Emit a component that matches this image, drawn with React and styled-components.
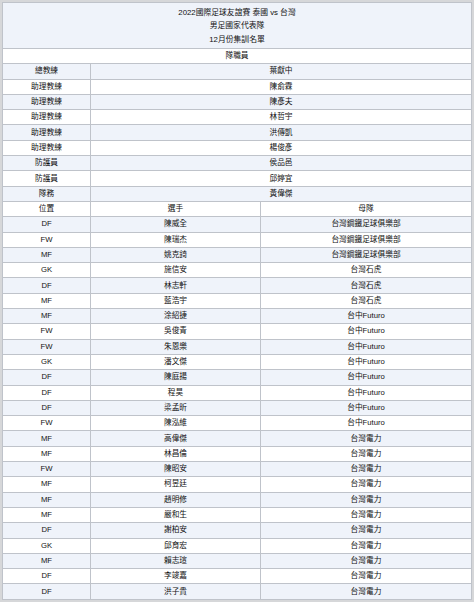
import React from "react";
import styled, { createGlobalStyle } from "styled-components";

const GlobalStyle = createGlobalStyle`
  html, body {
    margin: 0;
    padding: 0;
    background: #d6d7d9;
  }
  body {
    font-family: "Liberation Sans", "Noto Sans CJK TC", sans-serif;
  }
`;

const Sheet = styled.div`
  width: 474px;
  height: 602px;
  box-sizing: border-box;
  padding: 2px 2px 0 2px;
  overflow: hidden;
`;

const Table = styled.table`
  width: 100%;
  border-collapse: collapse;
  table-layout: fixed;
  font-size: 7.7px;
  color: #111;
  background: #fff;

  tr:nth-child(odd) {
    background: #eff3fa;
  }
`;

const Row = styled.tr`
  height: ${p => (p.$tall ? "46px" : "15.3px")};
`;

const Cell = styled.td`
  border: 1px solid #bfc3ca;
  text-align: center;
  vertical-align: middle;
  padding: 0;
  line-height: ${p => (p.$lines ? "13.3px" : "12px")};
  white-space: nowrap;
`;

const Title = styled.div`
  display: flex;
  flex-direction: column;
  align-items: center;
  padding-top: 1px;
  font-size: 7.8px;
`;

const staff = [
  ["總教練", "葉獻中"],
  ["助理教練", "陳俞霖"],
  ["助理教練", "陳彥夫"],
  ["助理教練", "林哲宇"],
  ["助理教練", "洪傳凱"],
  ["助理教練", "楊俊彥"],
  ["防護員", "侯品邑"],
  ["防護員", "邱婷宜"],
  ["隊務", "黃偉傑"]
];

const STEEL = "台灣鋼鐵足球俱樂部";
const TIGER = "台灣石虎";
const FUTURO = "台中Futuro";
const POWER = "台灣電力";

const players = [
  ["DF", "陳威全", STEEL],
  ["FW", "陳瑞杰", STEEL],
  ["MF", "姚克錡", STEEL],
  ["GK", "施信安", TIGER],
  ["DF", "林志軒", TIGER],
  ["MF", "藍浩宇", TIGER],
  ["MF", "涂紹捷", FUTURO],
  ["FW", "吳俊青", FUTURO],
  ["FW", "朱恩樂", FUTURO],
  ["GK", "潘文傑", FUTURO],
  ["DF", "陳庭揚", FUTURO],
  ["DF", "程昊", FUTURO],
  ["DF", "梁孟昕", FUTURO],
  ["FW", "陳泓維", FUTURO],
  ["MF", "高偉傑", POWER],
  ["MF", "林昌倫", POWER],
  ["FW", "陳昭安", POWER],
  ["MF", "柯昱廷", POWER],
  ["MF", "趙明修", POWER],
  ["MF", "嚴和生", POWER],
  ["DF", "謝柏安", POWER],
  ["GK", "邱育宏", POWER],
  ["MF", "賴志瑄", POWER],
  ["DF", "李竣嘉", POWER],
  ["DF", "洪子貴", POWER]
];

export default function App() {
  return (
    <>
      <GlobalStyle />
      <Sheet>
        <Table>
          <colgroup>
            <col style={{ width: "88px" }} />
            <col style={{ width: "170px" }} />
            <col />
          </colgroup>
          <tbody>
            <Row $tall>
              <Cell colSpan={3} $lines>
                <Title>
                  <span>2022國際足球友誼賽 泰國 vs 台灣</span>
                  <span>男足國家代表隊</span>
                  <span>12月份集訓名單</span>
                </Title>
              </Cell>
            </Row>
            <Row>
              <Cell colSpan={3}>隊職員</Cell>
            </Row>
            {staff.map(([role, name], i) => (
              <Row key={"s" + i}>
                <Cell>{role}</Cell>
                <Cell colSpan={2}>{name}</Cell>
              </Row>
            ))}
            <Row>
              <Cell>位置</Cell>
              <Cell>選手</Cell>
              <Cell>母隊</Cell>
            </Row>
            {players.map(([pos, name, club], i) => (
              <Row key={"p" + i}>
                <Cell>{pos}</Cell>
                <Cell>{name}</Cell>
                <Cell>{club}</Cell>
              </Row>
            ))}
          </tbody>
        </Table>
      </Sheet>
    </>
  );
}
